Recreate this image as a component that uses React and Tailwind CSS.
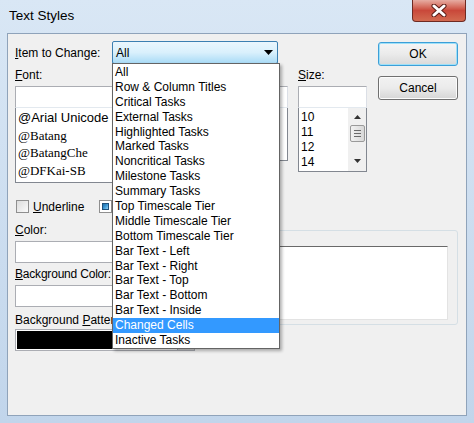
import React from 'react';

const items = [
  'All', 'Row & Column Titles', 'Critical Tasks', 'External Tasks', 'Highlighted Tasks',
  'Marked Tasks', 'Noncritical Tasks', 'Milestone Tasks', 'Summary Tasks', 'Top Timescale Tier',
  'Middle Timescale Tier', 'Bottom Timescale Tier', 'Bar Text - Left', 'Bar Text - Right',
  'Bar Text - Top', 'Bar Text - Bottom', 'Bar Text - Inside', 'Changed Cells', 'Inactive Tasks'
];

const fonts = [
  { name: '@Arial Unicode', cls: "font-['Liberation_Sans',sans-serif]" },
  { name: '@Batang', cls: "font-['Liberation_Serif',serif]" },
  { name: '@BatangChe', cls: "font-['Liberation_Serif',serif]" },
  { name: '@DFKai-SB', cls: "font-['Liberation_Serif',serif]" }
];

const TextBox = ({ h = 'h-[22px]' }) => (
  <div className={`${h} bg-white border border-[#abadb3] border-b-[#e3e9ef] border-r-[#dbdfe6]`} />
);

const ComboBox = ({ children }) => (
  <div className="h-[22px] bg-white border border-[#abadb3] flex">
    <div className="flex-1">{children}</div>
    <div className="w-[17px] bg-gradient-to-b from-[#f2f2f2] to-[#d5d5d5] border-l border-[#abadb3]" />
  </div>
);

const Label = ({ children, className = '' }) => (
  <div className={`h-[14px] leading-[14px] whitespace-nowrap ${className}`}>{children}</div>
);

const Arrow = ({ up }) => (
  <svg width="7" height="4" viewBox="0 0 7 4">
    <path d={up ? 'M0 4 L3.5 0 L7 4 Z' : 'M0 0 L3.5 4 L7 0 Z'} fill="#333" />
  </svg>
);

function ItemDropdown() {
  return (
    <div className="absolute top-[22px] left-0 w-[168px] z-10 bg-white border border-[#646464] pt-[1px] shadow-[2px_2px_3px_rgba(0,0,0,0.3)]">
      {items.map(t => (
        <div
          key={t}
          className={`h-[14.9px] leading-[14.9px] pl-[2px] whitespace-nowrap ${t === 'Changed Cells' ? 'bg-[#3399ff] text-white' : ''}`}
        >
          {t}
        </div>
      ))}
    </div>
  );
}

export default function App() {
  return (
    <div className="w-[474px] h-[423px] overflow-hidden flex flex-col bg-gradient-to-b from-[#d9e7f5] to-[#c1d5eb] font-['Liberation_Sans',Arial,sans-serif] text-[12px] text-black">
      {/* title bar */}
      <div className="h-[33px] flex items-start shrink-0">
        <span className="pl-[9px] pt-[8px] text-[13.5px] leading-[16px]">Text Styles</span>
        <div className="ml-auto mr-[8px] w-[54px] h-[22px] rounded-b-[4px] border border-t-0 border-[#6e2a22] bg-gradient-to-b from-[#e6aca2] via-[#c9483a] to-[#d26a50] flex items-center justify-center">
          <svg width="16" height="13" viewBox="0 0 16 13">
            <path d="M3 2 L13 11 M13 2 L3 11" stroke="#5a1d16" strokeWidth="5" strokeLinecap="round" />
            <path d="M3 2 L13 11 M13 2 L3 11" stroke="#fff" strokeWidth="3" strokeLinecap="round" />
          </svg>
        </div>
      </div>

      {/* client area */}
      <div className="mx-[7px] h-[383px] shrink-0 border border-[#8fa3ba] bg-[#f0f0f0] pt-[7px] pl-[7px]">
        <div className="flex">
          {/* left part */}
          <div className="w-[352px]">
            <div className="flex items-center h-[23px]">
              <div className="w-[97px]"><u>I</u>tem to Change:</div>
              <div className="relative w-[166px] h-[23px]">
                <div className="h-full rounded-[2px] border border-[#3c7fb1] bg-gradient-to-b from-[#eaf6fd] via-[#d9f0fc] to-[#a9dbf6] flex items-center pl-[3px]">
                  <span className="flex-1">All</span>
                  <span className="pr-[4px]">
                    <svg width="9" height="5" viewBox="0 0 9 5"><path d="M0 0 L4.5 5 L9 0 Z" fill="#000" /></svg>
                  </span>
                </div>
                <ItemDropdown />
              </div>
            </div>

            <div className="mt-[4px] flex gap-[10px]">
              <div className="w-[176px]">
                <Label className="mb-[4px]"><u>F</u>ont:</Label>
                <TextBox />
                <div className="h-[75px] bg-white border border-[#828790] border-t-0 pt-[1px] pl-[2px] text-[13px]">
                  {fonts.map(f => (
                    <div key={f.name} className={`h-[17.5px] leading-[17.5px] whitespace-nowrap ${f.cls}`}>{f.name}</div>
                  ))}
                </div>
              </div>
              <div className="w-[87px] pt-[18px]">
                <TextBox />
                <div className="h-[53px] bg-white border border-[#828790] border-t-0" />
              </div>
              <div className="w-[69px]">
                <Label className="mb-[4px]"><u>S</u>ize:</Label>
                <TextBox />
                <div className="h-[64px] bg-white border border-[#828790] border-t-0 flex">
                  <div className="flex-1 pl-[2px] pt-[2px]">
                    {['10', '11', '12', '14'].map(s => (
                      <div key={s} className="h-[15px] leading-[15px]">{s}</div>
                    ))}
                  </div>
                  <div className="w-[18px] bg-[#f0f0f0] flex flex-col items-center">
                    <div className="h-[17px] flex items-center"><Arrow up /></div>
                    <div className="w-[15px] h-[17px] rounded-[2px] border border-[#9a9a9a] bg-gradient-to-r from-[#f2f2f2] to-[#d8d8d8] flex flex-col items-center justify-center gap-[2px]">
                      <div className="w-[7px] h-px bg-[#6b6b6b]" />
                      <div className="w-[7px] h-px bg-[#6b6b6b]" />
                      <div className="w-[7px] h-px bg-[#6b6b6b]" />
                    </div>
                    <div className="flex-1" />
                    <div className="h-[17px] flex items-center pb-[3px]"><Arrow /></div>
                  </div>
                </div>
              </div>
            </div>

            <div className="mt-[16px] h-[15px] flex items-center">
              <div className="w-[13px] h-[13px] ml-[1px] border border-[#8f8f8f] bg-gradient-to-br from-[#dcdcdc] to-[#fbfbfb]" />
              <span className="ml-[4px] w-[66px]"><u>U</u>nderline</span>
              <div className="w-[13px] h-[13px] border border-[#8f8f8f] bg-white p-[2px]">
                <div className="w-full h-full bg-gradient-to-br from-[#1f6ea8] via-[#3d98d4] to-[#8fd0f2] border border-[#1d4f7a]" />
              </div>
            </div>
          </div>

          {/* buttons */}
          <div className="ml-[11px] pt-[1px] w-[80px] flex flex-col gap-[10px]">
            <div className="h-[24px] rounded-[3px] border border-[#3c9fd8] shadow-[inset_0_0_0_1px_#9ee0f8] bg-gradient-to-b from-[#f5f5f5] via-[#ebebeb] to-[#d9d9d9] flex items-center justify-center">OK</div>
            <div className="h-[24px] rounded-[3px] border border-[#707070] shadow-[inset_0_0_0_1px_#fcfcfc] bg-gradient-to-b from-[#f2f2f2] via-[#ebebeb] to-[#d6d6d6] flex items-center justify-center">Cancel</div>
          </div>
        </div>

        <div className="mt-[9px] flex">
          <div className="w-[180px]">
            <Label><u>C</u>olor:</Label>
            <div className="mt-[4px]"><ComboBox /></div>
            <Label className="mt-[4px] tracking-[-0.2px]"><u>B</u>ackground Color:</Label>
            <div className="mt-[4px]"><ComboBox /></div>
            <Label className="mt-[6px] w-[97px] overflow-hidden">Background <u>P</u>attern:</Label>
            <div className="mt-[2px]">
              <ComboBox>
                <div className="m-[1px] h-[18px] bg-black" />
              </ComboBox>
            </div>
          </div>
          <div className="ml-[10px] w-[253px] mt-[7px] h-[95px] rounded-[3px] border border-[#d5dfe5] pt-[15px] pr-[9px] pb-[4px] pl-[9px]">
            <div className="h-full bg-white border border-t-[#696969] border-l-[#696969] border-r-[#e3e3e3] border-b-[#e3e3e3]" />
          </div>
        </div>
      </div>
    </div>
  );
}
